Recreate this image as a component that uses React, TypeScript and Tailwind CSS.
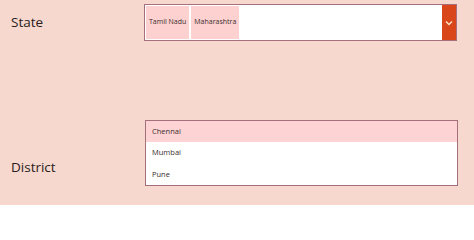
import React from "react";

export default function App() {
  return (
    <div
      className="w-[474px] h-[205px] bg-[#f6d8ce] flex flex-col overflow-hidden"
      style={{ fontFamily: '"Open Sans", "Noto Sans", sans-serif' }}
    >
      <div className="flex items-center mt-[4px] h-[37px]">
        <div className="w-[144px] pl-[11px] text-[13.5px] text-[#2b2020]">State</div>
        <div className="flex w-[313px] h-[37px] border border-[#a56f7c] bg-white">
          <div className="flex flex-1 items-stretch gap-[2px] p-[1px]">
            <div className="flex items-center px-[3px] bg-[#fdd1cf] text-[7px] text-[#3a2e2e]">Tamil Nadu</div>
            <div className="flex items-center px-[3px] bg-[#fdd1cf] text-[7px] text-[#3a2e2e]">Maharashtra</div>
          </div>
          <div className="w-[14px] bg-[#d8461a] flex items-center justify-center">
            <svg width="8" height="6" viewBox="0 0 8 6">
              <path d="M1 1.5 L4 4.5 L7 1.5" fill="none" stroke="#ffe6c8" strokeWidth="1.4" />
            </svg>
          </div>
        </div>
      </div>
      <div className="flex mt-[79px]">
        <div className="w-[145px] pl-[11px] text-[13.5px] text-[#2b2020] self-end pb-[9px]">District</div>
        <div className="w-[313px] border border-[#a56f7c] bg-white flex flex-col text-[7.5px] text-[#3a2e2e]">
          <div className="h-[21px] flex items-center pl-[6px] bg-[#fdd3d3]">Chennai</div>
          <div className="h-[22px] flex items-center pl-[6px]">Mumbai</div>
          <div className="h-[21px] flex items-center pl-[6px]">Pune</div>
        </div>
      </div>
    </div>
  );
}
